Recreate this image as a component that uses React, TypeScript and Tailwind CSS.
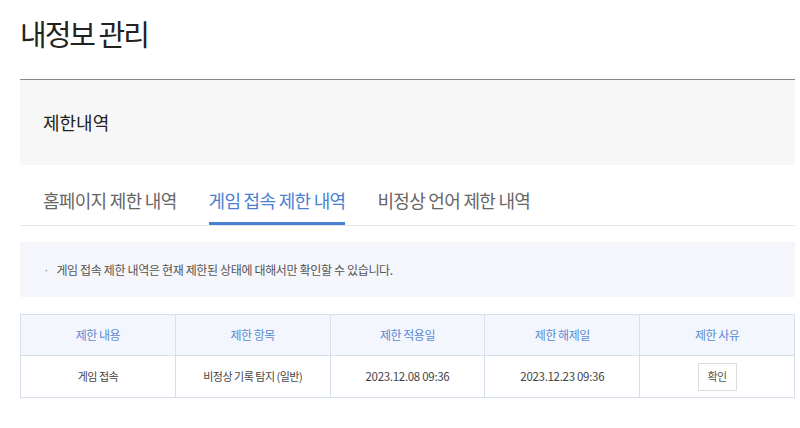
import React from "react";

const tabs = ["홈페이지 제한 내역", "게임 접속 제한 내역", "비정상 언어 제한 내역"];

const columns = ["제한 내용", "제한 항목", "제한 적용일", "제한 해제일", "제한 사유"];

const rows = [
  {
    content: "게임 접속",
    item: "비정상 기록 탐지 (일반)",
    appliedAt: "2023.12.08 09:36",
    releasedAt: "2023.12.23 09:36",
  },
];

export default function App() {
  const activeTab = 1;

  return (
    <div className="w-[800px] h-[428px] bg-white font-['Noto_Sans_CJK_KR',sans-serif] text-[#222]">
      <div className="pl-5 pr-[5px] pt-[13px]">
        <h1 className="text-[29px] leading-[40px] tracking-[-2px] text-[#222]">내정보 관리</h1>

        <div className="mt-[26px] border-t border-[#888]">
          <div className="h-[85px] bg-[#f7f7f7] flex items-center pl-[23px]">
            <h2 className="text-[18px] text-[#222]">제한내역</h2>
          </div>
        </div>

        <div className="flex gap-8 pl-[23px] pt-[22px] border-b border-[#e6e6e6]">
          {tabs.map((tab, i) => (
            <button
              key={tab}
              className={`pb-[9px] border-b-[3px] text-[18px] leading-[26px] tracking-[-0.7px] ${
                i === activeTab
                  ? "border-[#4a7fd2] text-[#4a7fd2]"
                  : "border-transparent text-[#666]"
              }`}
            >
              {tab}
            </button>
          ))}
        </div>

        <div className="mt-4 h-[55px] bg-[#f4f6fb] flex items-center pl-[23px] text-[12px] tracking-[-0.35px] text-[#555]">
          <span className="text-[#999] mr-[7px]">·</span>
          <span>게임 접속 제한 내역은 현재 제한된 상태에 대해서만 확인할 수 있습니다.</span>
        </div>

        <table className="mt-[17px] w-full table-fixed border-collapse">
          <thead>
            <tr className="h-[41px] bg-[#f3f6fc]">
              {columns.map((c) => (
                <th
                  key={c}
                  className="border border-[#d8dfec] font-normal text-[12px] tracking-[-0.5px] text-[#5b8ad4]"
                >
                  {c}
                </th>
              ))}
            </tr>
          </thead>
          <tbody>
            {rows.map((r) => (
              <tr key={r.content} className="h-[42px] text-[11px] tracking-[-0.5px] text-[#444] text-center">
                <td className="border border-[#d8dfec]">{r.content}</td>
                <td className="border border-[#d8dfec]">{r.item}</td>
                <td className="border border-[#d8dfec] text-[11.5px] tracking-[-0.3px]">{r.appliedAt}</td>
                <td className="border border-[#d8dfec] text-[11.5px] tracking-[-0.3px]">{r.releasedAt}</td>
                <td className="border border-[#d8dfec]">
                  <button className="w-[39px] h-[28px] border border-[#ddd] bg-white text-[11px] text-[#555]">
                    확인
                  </button>
                </td>
              </tr>
            ))}
          </tbody>
        </table>
      </div>
    </div>
  );
}
